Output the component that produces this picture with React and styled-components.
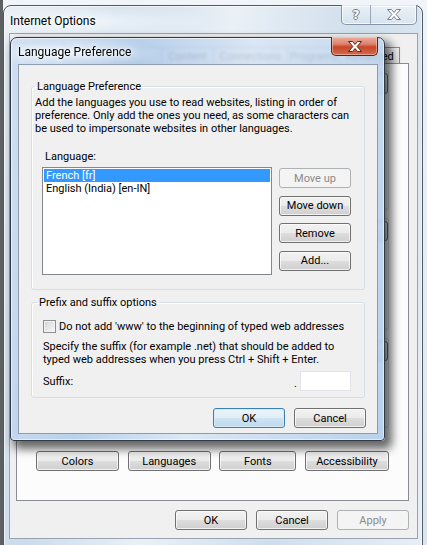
import React from 'react';
import styled, { createGlobalStyle, css } from 'styled-components';

const GlobalStyle = createGlobalStyle`
  html, body { margin: 0; padding: 0; }
  body {
    font-family: Roboto, "Open Sans", sans-serif;
    font-size: 11px;
    line-height: 13px;
    color: #000;
  }
  * { box-sizing: border-box; }
`;

// tabs of Internet Options; the first ones sit under the dialog title text
const tabs = [
  { name: 'General', w: 48, active: true, covered: true },
  { name: 'Security', w: 53, covered: true },
  { name: 'Privacy', w: 47, covered: true },
  { name: 'Content', w: 53 },
  { name: 'Connections', w: 75 },
  { name: 'Programs', w: 53 },
  { name: 'Advanced', w: 61 },
];

// X shape for caption buttons
const XGlyph = ({ fill, stroke }) => (
  <svg width="14" height="11" viewBox="-0.5 -0.5 14 11">
    <polygon
      points="0,0 4,0 6.5,3 9,0 13,0 8.6,5 13,10 9,10 6.5,7 4,10 0,10 4.4,5"
      fill={fill}
      stroke={stroke}
      strokeWidth="1"
      strokeLinejoin="round"
    />
  </svg>
);

export default function App() {
  return (
    <>
      <GlobalStyle />
      <Desktop>
        <OuterWindow>
          <TitleBar>
            <WindowTitle>Internet Options</WindowTitle>
            <CaptionGroup>
              <CaptionButton $w={28}><HelpGlyph>?</HelpGlyph></CaptionButton>
              <CaptionButton $w={46}><XGlyph fill="rgba(255,255,255,0.9)" stroke="#7a7f86" /></CaptionButton>
            </CaptionGroup>
          </TitleBar>
          <ClientArea>
            <TabStrip>
              {tabs.map(t => (
                <Tab key={t.name} $w={t.w} $active={t.active}>{!t.covered && t.name}</Tab>
              ))}
            </TabStrip>
            <TabPanel>
              {/* General tab groups, only their right edges peek out past the dialog */}
              <PageGroup $h={140} $pb={13}>
                <PageButtons>
                  <Win7Button $w={75} $h={21} />
                  <Win7Button $w={75} $h={21} />
                  <Win7Button $w={75} $h={21} />
                </PageButtons>
              </PageGroup>
              <PageGroup $h={112} $pb={27} $mt={8}>
                <PageButtons>
                  <Win7Button $w={75} />
                  <Win7Button $w={75} />
                </PageButtons>
              </PageGroup>
              <PageGroup $h={90} $pb={7} $mt={8}>
                <PageButtons>
                  <Win7Button $w={75} />
                </PageButtons>
              </PageGroup>
              <AppearanceRow>
                <Win7Button $w={83}>Colors</Win7Button>
                <Win7Button $w={83}>Languages</Win7Button>
                <Win7Button $w={77}>Fonts</Win7Button>
                <Win7Button $w={84}>Accessibility</Win7Button>
              </AppearanceRow>
            </TabPanel>
            <OuterButtons>
              <Win7Button>OK</Win7Button>
              <Win7Button>Cancel</Win7Button>
              <Win7Button disabled>Apply</Win7Button>
            </OuterButtons>
          </ClientArea>
        </OuterWindow>

        <Dialog>
          <DialogTitleBar>
            <DialogTitle>Language Preference</DialogTitle>
            <RedClose><XGlyph fill="#ffffff" stroke="#5e2417" /></RedClose>
          </DialogTitleBar>
          <DialogClient>
            <Group $pl={3} $pb={14}>
              <Legend>Language Preference</Legend>
              <Para>
                Add the languages you use to read websites, listing in order of<br />
                preference. Only add the ones you need, as some characters can<br />
                be used to impersonate websites in other languages.
              </Para>
              <FieldLabel>Language:</FieldLabel>
              <ListRow>
                <ListBox>
                  <ListItem $selected>French [fr]</ListItem>
                  <ListItem>English (India) [en-IN]</ListItem>
                </ListBox>
                <SideButtons>
                  <Win7Button disabled>Move up</Win7Button>
                  <Win7Button>Move down</Win7Button>
                  <Win7Button>Remove</Win7Button>
                  <Win7Button>Add...</Win7Button>
                </SideButtons>
              </ListRow>
            </Group>
            <Group $pl={11} $pb={6} $mt={6}>
              <Legend $ml={-6}>Prefix and suffix options</Legend>
              <CheckRow>
                <CheckBox />
                <span>Do not add 'www' to the beginning of typed web addresses</span>
              </CheckRow>
              <Para $mt={7}>
                Specify the suffix (for example .net) that should be added to<br />
                typed web addresses when you press Ctrl + Shift + Enter.
              </Para>
              <SuffixRow>
                <span>Suffix:</span>
                <Dot>.</Dot>
                <SuffixInput />
              </SuffixRow>
            </Group>
            <DialogButtons>
              <Win7Button $default>OK</Win7Button>
              <Win7Button>Cancel</Win7Button>
            </DialogButtons>
          </DialogClient>
        </Dialog>
      </Desktop>
    </>
  );
}

//DESKTOP + OUTER WINDOW
const Desktop = styled.div`
  position: relative;
  width: 427px;
  height: 545px;
  overflow: hidden;
  padding: 5px 4px 0 3px;
  background:
    linear-gradient(to right, #5d6164 0 3px, transparent 3px),
    linear-gradient(180deg, #f1f4f8 0%, #dce4ec 100%);
`;
const OuterWindow = styled.div`
  width: 420px;
  height: 548px;
  display: flex;
  flex-direction: column;
  padding: 0 4px 0 5px;
  border: 1px solid #4f5a66;
  border-radius: 8px 8px 0 0;
  background:
    radial-gradient(ellipse 130px 22px at 80px 16px, rgba(255,255,255,0.75), transparent),
    linear-gradient(100deg, #e6edf5 0%, #cbdbeb 22%, #eaf0f6 45%, #cfdeec 70%, #e8eef5 100%);
  box-shadow: inset 0 0 0 1px rgba(255,255,255,0.6);
`;
const TitleBar = styled.div`
  height: 27px;
  flex: none;
  display: flex;
  align-items: flex-start;
`;
const WindowTitle = styled.div`
  margin: 8px 0 0 1px;
  font-size: 12px;
  line-height: 14px;
  text-shadow: 0 0 6px #fff, 0 0 3px #fff;
`;
const CaptionGroup = styled.div`
  display: flex;
  height: 20px;
  margin: -1px 1px 0 auto;
  border: 1px solid rgba(70, 88, 110, 0.6);
  border-top: none;
  border-radius: 0 0 5px 5px;
  overflow: hidden;
  background: linear-gradient(rgba(255,255,255,0.55), rgba(222,232,243,0.4));
  box-shadow: inset 0 0 0 1px rgba(255,255,255,0.7);
`;
const CaptionButton = styled.div`
  width: ${p => p.$w}px;
  display: flex;
  align-items: center;
  justify-content: center;
  & + & {
    border-left: 1px solid rgba(70, 88, 110, 0.45);
  }
`;
const HelpGlyph = styled.span`
  font-family: "DejaVu Sans", sans-serif;
  font-weight: bold;
  font-size: 12px;
  line-height: 12px;
  color: #fff;
  text-shadow: 1px 0 #777, -1px 0 #777, 0 1px #777, 0 -1px #777;
`;
const ClientArea = styled.div`
  height: 506px;
  flex: none;
  display: flex;
  flex-direction: column;
  padding: 9px 8px 8px 6px;
  background: #f0f0f0;
  border: 1px solid #97a3b0;
`;
const TabStrip = styled.div`
  height: 20px;
  display: flex;
  align-items: flex-end;
  flex: none;
`;
const Tab = styled.div`
  width: ${p => p.$w}px;
  height: 17px;
  margin-bottom: -1px;
  display: flex;
  align-items: center;
  justify-content: center;
  border: 1px solid #898c95;
  border-bottom: none;
  background: linear-gradient(#f3f3f3, #e3e3e3);
  & + & { margin-left: -1px; }
  ${p => p.$active && css`
    height: 21px;
    background: #fcfcfc;
    position: relative;
    z-index: 1;
  `}
`;
const TabPanel = styled.div`
  height: 438px;
  flex: none;
  display: flex;
  flex-direction: column;
  padding: 6px 19px 29px;
  background: #fcfcfc;
  border: 1px solid #898c95;
`;
const PageGroup = styled.fieldset`
  height: ${p => p.$h}px;
  margin: ${p => p.$mt || 0}px 0 0;
  padding: 2px 0 ${p => p.$pb}px 8px;
  display: flex;
  flex-direction: column;
  border: 1px solid #d5dfe5;
  border-radius: 3px;
  min-inline-size: 0;
`;
const PageButtons = styled.div`
  margin-top: auto;
  display: flex;
  justify-content: flex-end;
  gap: 7px;
`;
const AppearanceRow = styled.div`
  margin-top: auto;
  display: flex;
  justify-content: space-between;
`;
const OuterButtons = styled.div`
  margin-top: 9px;
  display: flex;
  justify-content: flex-end;
  gap: 9px;
`;

//SHARED CONTROLS
const Win7Button = styled.button`
  width: ${p => p.$w || 72}px;
  height: ${p => p.$h || 20}px;
  flex: none;
  padding: 0;
  font: inherit;
  color: #000;
  border: 1px solid #707070;
  border-radius: 3px;
  background: linear-gradient(#f2f2f2 0%, #ebebeb 48%, #dddddd 52%, #cfcfcf 100%);
  box-shadow: inset 0 0 0 1px rgba(255,255,255,0.7);
  ${p => p.$default && css`
    border-color: #3c7fb1;
    background: linear-gradient(#ebf4fa 0%, #e0eef7 48%, #cfe4f1 52%, #bdd8ea 100%);
    box-shadow: inset 0 0 0 1px #d3ebf9;
  `}
  &:disabled {
    color: #8a8a8a;
    border-color: #adb2b5;
    background: #f4f4f4;
    box-shadow: none;
  }
`;
const Legend = styled.legend`
  padding: 0 2px;
  margin-left: ${p => p.$ml || 0}px;
  line-height: 13px;
`;

//LANGUAGE PREFERENCE DIALOG
const Dialog = styled.div`
  position: absolute;
  z-index: 5;
  left: 10px;
  top: 37px;
  width: 375px;
  height: 404px;
  display: flex;
  flex-direction: column;
  padding: 0 6px 6px 7px;
  border: 1px solid #2f3a46;
  border-radius: 7px 7px 4px 4px;
  background:
    radial-gradient(ellipse 90px 14px at 60px 14px, rgba(255,255,255,0.55), transparent),
    linear-gradient(100deg, rgba(206,223,242,0.88) 0%, rgba(176,203,233,0.88) 30%, rgba(214,228,244,0.88) 55%, rgba(178,204,234,0.9) 100%);
  backdrop-filter: blur(1.5px);
  box-shadow: inset 0 0 0 1px rgba(255,255,255,0.55), 5px 6px 10px 2px rgba(0,0,0,0.6);
`;
const DialogTitleBar = styled.div`
  height: 26px;
  flex: none;
  display: flex;
  align-items: flex-start;
`;
const DialogTitle = styled.div`
  margin-top: 7px;
  font-size: 12px;
  line-height: 14px;
  text-shadow: 0 0 6px #fff, 0 0 3px #fff;
`;
const RedClose = styled.div`
  width: 47px;
  height: 19px;
  margin: -1px 0 0 auto;
  display: flex;
  align-items: center;
  justify-content: center;
  border: 1px solid #5a2216;
  border-top: none;
  border-radius: 0 0 5px 5px;
  background: linear-gradient(#eab0a2 0%, #dc806a 40%, #c7462a 55%, #d5694b 100%);
  box-shadow: inset 0 0 0 1px rgba(255,215,205,0.5);
`;
const DialogClient = styled.div`
  height: 370px;
  flex: none;
  display: flex;
  flex-direction: column;
  padding: 15px 12px 8px;
  background: #f0f0f0;
  border: 1px solid #8d9cae;
`;
const Group = styled.fieldset`
  margin: ${p => p.$mt || 0}px 0 0;
  padding: 3px 13px ${p => p.$pb}px ${p => p.$pl}px;
  border: 1px solid #d5dfe5;
  border-radius: 3px;
  box-shadow: 1px 1px 0 #fff inset;
  min-inline-size: 0;
`;
const Para = styled.p`
  margin: ${p => p.$mt || 0}px 0 0;
  white-space: nowrap;
`;
const FieldLabel = styled.div`
  margin: 15px 0 0 10px;
`;
const ListRow = styled.div`
  margin: 4px 0 0 7px;
  display: flex;
  gap: 7px;
`;
const ListBox = styled.div`
  width: 230px;
  height: 108px;
  padding: 1px;
  background: #fff;
  border: 1px solid #828790;
`;
const ListItem = styled.div`
  height: 13px;
  padding-left: 2px;
  line-height: 13px;
  ${p => p.$selected && css`
    background: #3399ff;
    color: #fff;
  `}
`;
const SideButtons = styled.div`
  margin-top: 1px;
  display: flex;
  flex-direction: column;
  gap: 7.67px;
`;
const CheckRow = styled.div`
  margin-top: 8px;
  height: 13px;
  display: flex;
  align-items: center;
  gap: 3px;
`;
const CheckBox = styled.span`
  width: 13px;
  height: 13px;
  flex: none;
  border: 1px solid #8e8f8f;
  background: linear-gradient(135deg, #cfd2d6 0%, #eeeeef 70%, #f8f8f8 100%);
  box-shadow: inset 0 0 0 1px #f2f2f2;
`;
const SuffixRow = styled.div`
  margin-top: 5px;
  height: 20px;
  display: flex;
  align-items: center;
`;
const Dot = styled.span`
  margin: 4px 3px 0 auto;
`;
const SuffixInput = styled.div`
  width: 51px;
  height: 20px;
  background: #fff;
  border: 1px solid #e2e3ea;
`;
const DialogButtons = styled.div`
  margin: 10px -1px 0 0;
  display: flex;
  justify-content: flex-end;
  gap: 9px;
`;
